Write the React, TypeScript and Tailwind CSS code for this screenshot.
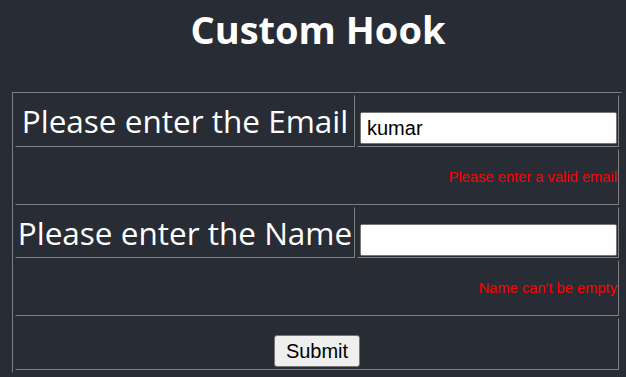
import { useState } from "react";

const cell =
  "border border-t-[#2c2c2c] border-l-[#2c2c2c] border-r-[#808080] border-b-[#808080] p-[1px]";

const App: React.FC = () => {
  const [email, setEmail] = useState("kumar");
  const [name, setName] = useState("");

  return (
    <div className="min-h-[377px] bg-[#282c34] text-white font-['Open_Sans',sans-serif]">
      <h1 className="h-[92px] pt-[5px] pl-[10px] text-center text-[38px] font-bold leading-[48px]">
        Custom Hook
      </h1>
      <table className="ml-[12px] w-[610px] border-separate border-spacing-[2px] border border-t-[#808080] border-l-[#808080] border-r-[#2c2c2c] border-b-[#2c2c2c]">
        <tbody>
          <tr className="h-[52px]">
            <td className={`${cell} w-[340px] whitespace-nowrap text-center text-[31.5px]`}>
              Please enter the Email
            </td>
            <td className={`${cell} pl-[2px] pb-[2px] align-bottom`}>
              <input
                type="text"
                value={email}
                onChange={(e) => setEmail(e.target.value)}
                className="block h-[32px] w-full rounded-[2px] border border-[#767676] bg-white px-[6px] font-['Liberation_Sans',sans-serif] text-[20px] text-black outline-none"
              />
            </td>
          </tr>
          <tr className="h-[56px]">
            <td
              colSpan={2}
              className={`${cell} text-right font-['Liberation_Sans',sans-serif] text-[14.7px] text-[#ff0000]`}
            >
              Please enter a valid email
            </td>
          </tr>
          <tr className="h-[51px]">
            <td className={`${cell} whitespace-nowrap text-center text-[31.5px]`}>
              Please enter the Name
            </td>
            <td className={`${cell} pl-[2px] align-bottom`}>
              <input
                type="text"
                value={name}
                onChange={(e) => setName(e.target.value)}
                className="block h-[32px] w-full rounded-[2px] border border-[#767676] bg-white px-[6px] font-['Liberation_Sans',sans-serif] text-[20px] text-black outline-none"
              />
            </td>
          </tr>
          <tr className="h-[56px]">
            <td
              colSpan={2}
              className={`${cell} text-right font-['Liberation_Sans',sans-serif] text-[14.7px] text-[#ff0000]`}
            >
              Name can't be empty
            </td>
          </tr>
          <tr className="h-[52px]">
            <td colSpan={2} className={`${cell} pb-[2px] text-center align-bottom`}>
              <button className="h-[32px] w-[86px] rounded-[3px] border border-[#767676] bg-[#efefef] font-['Liberation_Sans',sans-serif] text-[20px] text-black">
                Submit
              </button>
            </td>
          </tr>
        </tbody>
      </table>
    </div>
  );
};

export default App;
